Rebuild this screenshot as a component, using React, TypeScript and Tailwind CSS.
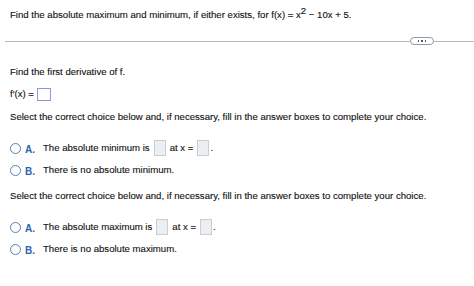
import React from "react";

const Radio = () => (
  <span className="inline-block w-[11px] h-[11px] rounded-full border border-[#5a7fc0] bg-white shrink-0" />
);

const GrayBox = () => (
  <span className="inline-block w-[12px] h-[16px] border border-[#c9ced6] bg-[#eceef2] align-middle" />
);

const Choice = ({ letter, children }: { letter: string; children: React.ReactNode }) => (
  <div className="flex items-center h-[22px] pl-[10px]">
    <Radio />
    <span className="ml-[4px] w-[18px] text-[#2e63b0] font-bold text-[10px] translate-y-[2px] [-webkit-text-stroke:0px]">{letter}.</span>
    <span className="flex items-center gap-[4px]">{children}</span>
  </div>
);

export default function App() {
  return (
    <div
      className="w-[474px] h-[286px] bg-white text-[#111] text-[9.6px] leading-[16px] overflow-hidden [-webkit-text-stroke:0.12px_#111]"
      style={{ fontFamily: '"Liberation Sans", Arial, sans-serif' }}
    >
      <div className="pl-[10px] pt-[7px] h-[28px] whitespace-nowrap">
        Find the absolute maximum and minimum, if either exists, for f(x) = x
        <span className="text-[9.6px] relative top-[-4px]">2</span> − 10x + 5.
      </div>
      <div className="relative ml-[5px] mt-[8px] h-[10px] flex items-center">
        <div className="w-full h-px bg-[#b8b8b8]" />
        <div className="absolute left-[405px] top-[1px] w-[24px] h-[8px] rounded-full border border-[#8f9ab0] bg-white flex items-center justify-center gap-[2px]">
          <span className="w-[1.5px] h-[1.5px] bg-[#556]" />
          <span className="w-[1.5px] h-[1.5px] bg-[#556]" />
          <span className="w-[1.5px] h-[1.5px] bg-[#556]" />
        </div>
      </div>
      <div className="pl-[10px] mt-[18px]">Find the first derivative of f.</div>
      <div className="pl-[10px] mt-[6px] h-[16px] flex items-center gap-[3px]">
        <span>f′(x) =</span>
        <span className="inline-block w-[14px] h-[13px] border border-[#8d9bd0] bg-white" />
      </div>
      <div className="pl-[10px] mt-[7px] whitespace-nowrap">
        Select the correct choice below and, if necessary, fill in the answer boxes to complete your choice.
      </div>
      <div className="mt-[12px]">
        <Choice letter="A">
          <span>The absolute minimum is</span>
          <GrayBox />
          <span>at x =</span>
          <GrayBox />
          <span className="-ml-[3px]">.</span>
        </Choice>
        <Choice letter="B">
          <span>There is no absolute minimum.</span>
        </Choice>
      </div>
      <div className="pl-[10px] mt-[7px] whitespace-nowrap">
        Select the correct choice below and, if necessary, fill in the answer boxes to complete your choice.
      </div>
      <div className="mt-[12px]">
        <Choice letter="A">
          <span>The absolute maximum is</span>
          <GrayBox />
          <span>at x =</span>
          <GrayBox />
          <span className="-ml-[3px]">.</span>
        </Choice>
        <Choice letter="B">
          <span>There is no absolute maximum.</span>
        </Choice>
      </div>
    </div>
  );
}
